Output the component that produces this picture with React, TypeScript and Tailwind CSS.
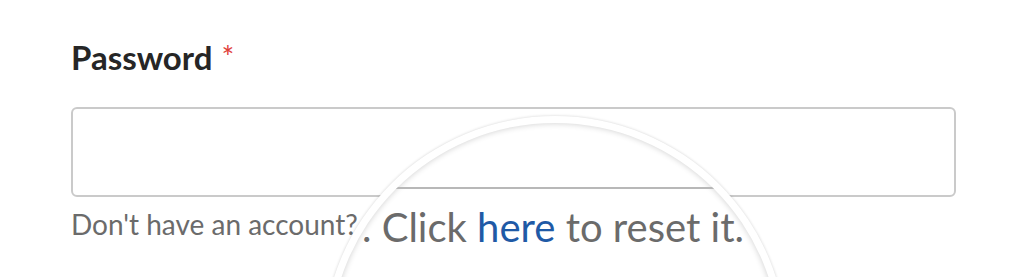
export default function App() {
  return (
    <div
      className="relative h-[277px] w-[1024px] overflow-hidden bg-white"
      style={{ fontFamily: "Lato, 'Noto Sans', sans-serif" }}
    >
      <div className="flex flex-col px-[71px] pt-[38px]">
        {/* label */}
        <label className="flex items-start text-[33px] font-bold leading-[38px] text-[#262626]">
          Password
          <span className="ml-[9px] mt-[-1px] text-[30px] font-normal leading-[38px] text-[#e0403a]">*</span>
        </label>

        {/* input */}
        <div className="mt-[31px] h-[90px] w-[885px] rounded-[6px] border-2 border-[#cacaca] bg-white" />

        {/* help text */}
        <p className="mt-[7px] text-[28px] leading-[40px] text-[#6b6b6b]">
          Don't have an account?
        </p>
      </div>

      {/* magnifier lens */}
      <div className="absolute left-[323px] top-[116px] h-[464px] w-[464px] rounded-full bg-white p-[7px] shadow-[0_0_3px_rgba(0,0,0,0.18)]">
        <div className="flex h-full w-full flex-col overflow-hidden rounded-full bg-white pt-[64px] shadow-[inset_0_0_6px_rgba(0,0,0,0.2)]">
          <div className="h-[2px] w-full bg-[#b8b8b8]" />
          <p className="ml-[32px] mt-[14px] whitespace-nowrap text-[40px] leading-[48px] text-[#6b6b6b]">
            . Click <span className="text-[#1f5aa6]">here</span> to reset it.
          </p>
        </div>
      </div>
    </div>
  );
}
